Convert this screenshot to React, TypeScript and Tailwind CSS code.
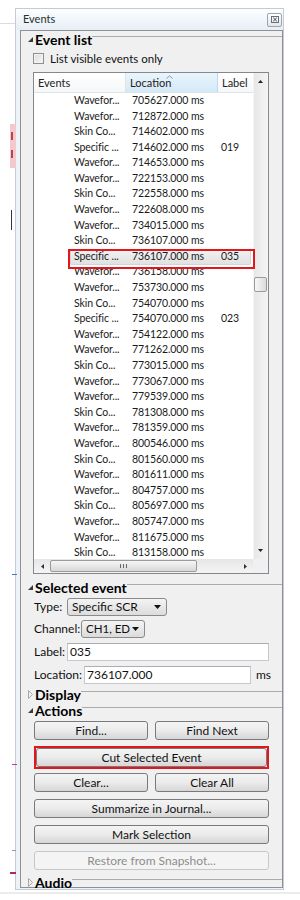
import React from "react";

type Row = { name: string; loc: string; label?: string };

const ROWS: Row[] = [
  { name: "Wavefor...", loc: "705627.000 ms" },
  { name: "Wavefor...", loc: "712872.000 ms" },
  { name: "Skin Co...", loc: "714602.000 ms" },
  { name: "Specific ...", loc: "714602.000 ms", label: "019" },
  { name: "Wavefor...", loc: "714653.000 ms" },
  { name: "Wavefor...", loc: "722153.000 ms" },
  { name: "Skin Co...", loc: "722558.000 ms" },
  { name: "Wavefor...", loc: "722608.000 ms" },
  { name: "Wavefor...", loc: "734015.000 ms" },
  { name: "Skin Co...", loc: "736107.000 ms" },
  { name: "Specific ...", loc: "736107.000 ms", label: "035" },
  { name: "Wavefor...", loc: "736158.000 ms" },
  { name: "Wavefor...", loc: "753730.000 ms" },
  { name: "Skin Co...", loc: "754070.000 ms" },
  { name: "Specific ...", loc: "754070.000 ms", label: "023" },
  { name: "Wavefor...", loc: "754122.000 ms" },
  { name: "Wavefor...", loc: "771262.000 ms" },
  { name: "Skin Co...", loc: "773015.000 ms" },
  { name: "Wavefor...", loc: "773067.000 ms" },
  { name: "Wavefor...", loc: "779539.000 ms" },
  { name: "Skin Co...", loc: "781308.000 ms" },
  { name: "Wavefor...", loc: "781359.000 ms" },
  { name: "Wavefor...", loc: "800546.000 ms" },
  { name: "Skin Co...", loc: "801560.000 ms" },
  { name: "Wavefor...", loc: "801611.000 ms" },
  { name: "Wavefor...", loc: "804757.000 ms" },
  { name: "Skin Co...", loc: "805697.000 ms" },
  { name: "Wavefor...", loc: "805747.000 ms" },
  { name: "Wavefor...", loc: "811675.000 ms" },
  { name: "Skin Co...", loc: "813158.000 ms" },
];

// index of the highlighted row
const SELECTED = 10;

function Triangle({ open }: { open: boolean }) {
  if (open) {
    return (
      <svg width="5" height="5" viewBox="0 0 5 5" className="mt-[5px]">
        <polygon points="5,0 5,5 0,5" fill="#3a3a3a" />
      </svg>
    );
  }
  return (
    <svg width="5" height="9" viewBox="0 0 5 9" className="mt-[3px]">
      <polygon points="0.5,0.5 4.5,4.5 0.5,8.5" fill="none" stroke="#a8a8a8" />
    </svg>
  );
}

function SectionHeader({ title, open, className }: { title: string; open: boolean; className: string }) {
  return (
    <div className={`flex h-[15px] items-start pl-[7px] ${className}`}>
      <div className="w-[7px] shrink-0">
        <Triangle open={open} />
      </div>
      <span className="text-[14px] font-bold leading-[15px] text-black">{title}</span>
      <div className="mt-[4px] h-px flex-1 bg-[#aaaaaa]" />
    </div>
  );
}

function Button({ children, disabled = false }: { children: React.ReactNode; disabled?: boolean }) {
  if (disabled) {
    return (
      <button
        type="button"
        className="flex h-[19px] w-full items-center justify-center rounded-[3px] border border-[#c4c8cc] bg-[#f4f4f4] text-[12px] text-[#8d8d8d]"
      >
        {children}
      </button>
    );
  }
  return (
    <button
      type="button"
      className="flex h-[19px] w-full items-center justify-center rounded-[3px] border border-[#7a7a7a] bg-linear-to-b from-[#f4f4f4] via-[#ebebeb] to-[#d6d6d6] text-[12px] text-[#111]"
    >
      {children}
    </button>
  );
}

function ComboArrow() {
  return (
    <svg width="7" height="4" viewBox="0 0 7 4" className="shrink-0">
      <polygon points="0,0 7,0 3.5,4" fill="#111" />
    </svg>
  );
}

function VScroll() {
  return (
    <div className="flex w-[15px] flex-col bg-linear-to-r from-[#e6e6e6] to-[#f5f5f5] shadow-[inset_1px_0_0_#f4f4f4]">
      <div className="flex h-[17px] items-center justify-center">
        <svg width="5" height="3" viewBox="0 0 5 3">
          <polygon points="0,3 5,3 2.5,0" fill="#222" />
        </svg>
      </div>
      <div className="flex-1">
        <div className="mt-[187px] ml-[1px] h-[15px] w-[13px] rounded-[2px] border border-[#9a9a9a] bg-linear-to-r from-[#f6f6f6] to-[#dcdcdc]" />
      </div>
      <div className="flex h-[17px] items-center justify-center">
        <svg width="5" height="3" viewBox="0 0 5 3">
          <polygon points="0,0 5,0 2.5,3" fill="#222" />
        </svg>
      </div>
      <div className="h-[14px] bg-[#f0f0f0]" />
    </div>
  );
}

function HScroll() {
  return (
    <div className="flex h-[14px] items-center bg-linear-to-b from-[#e6e6e6] to-[#f4f4f4]">
      <div className="flex w-[16px] justify-center">
        <svg width="3" height="5" viewBox="0 0 3 5">
          <polygon points="3,0 3,5 0,2.5" fill="#333" />
        </svg>
      </div>
      <div className="flex h-[12px] w-[147px] items-center justify-center gap-[2px] rounded-[2px] border border-[#9a9a9a] bg-linear-to-b from-[#f6f6f6] to-[#d8d8d8]">
        <div className="h-[4px] w-px bg-[#666]" />
        <div className="h-[4px] w-px bg-[#666]" />
        <div className="h-[4px] w-px bg-[#666]" />
      </div>
      <div className="flex flex-1 justify-end pr-[6px]">
        <svg width="3" height="5" viewBox="0 0 3 5">
          <polygon points="0,0 0,5 3,2.5" fill="#333" />
        </svg>
      </div>
    </div>
  );
}

function EventTable() {
  return (
    <div className="relative mt-[7px] ml-[12px] flex h-[502px] w-[236px] border border-[#828790] bg-white">
      <div className="flex w-[219px] flex-col">
        <div className="flex h-[20px] border-b border-[#e2e3e5] text-[11px] leading-[19px] text-[#222]">
          <div className="w-[92px] border-r border-[#e1e2e4] bg-linear-to-b from-white to-[#f6f7f8] pl-[4px]">Events</div>
          <div className="relative w-[92px] border-r border-[#bcd9ee] bg-linear-to-b from-[#eaf5fc] to-[#d3e9f8] pl-[4px]">
            Location
            <svg width="7" height="4" viewBox="0 0 7 4" className="absolute top-[2px] left-[40px]">
              <polyline points="0.5,3.5 3.5,0.8 6.5,3.5" fill="none" stroke="#8a9aa8" />
            </svg>
          </div>
          <div className="flex-1 bg-linear-to-b from-white to-[#f6f7f8] pl-[4px]">Label</div>
        </div>
        <div className="flex-1 overflow-hidden">
          {ROWS.map((r, i) => (
            <div key={i} className="flex h-[15.6px] pr-[2px] pl-[36px] text-[10.5px] tracking-[-0.1px] text-[#1a1a1a]">
              <div
                className={
                  i === SELECTED
                    ? "flex flex-1 items-center rounded-[2px] bg-linear-to-b from-[#f3f3f3] to-[#e0e0e0] shadow-[inset_0_0_0_1px_#d4d4d4]"
                    : "flex flex-1 items-center"
                }
              >
                <span className="w-[56px] shrink-0 overflow-hidden pl-[4px] whitespace-nowrap">{r.name}</span>
                <span className="w-[92px] shrink-0 pl-[6px] whitespace-nowrap">{r.loc}</span>
                <span className="pl-[3px]">{r.label}</span>
              </div>
            </div>
          ))}
        </div>
        <HScroll />
      </div>
      <VScroll />
      {/* red annotation around the selected row */}
      <div className="absolute top-[176px] left-[34px] h-[20px] w-[187px] border-2 border-[#e3161b]" />
    </div>
  );
}

function CloseButton() {
  return (
    <div className="flex h-[14px] w-[15px] items-center justify-center rounded-[2px] border border-[#9ea4ab] bg-linear-to-b from-white to-[#e2e6ea]">
      <svg width="8" height="7" viewBox="0 0 8 7">
        <rect x="0.5" y="0.5" width="7" height="6" fill="none" stroke="#6b6f74" />
        <path d="M2.2 1.8 L5.8 5.2 M5.8 1.8 L2.2 5.2" stroke="#45494e" strokeWidth="1" />
      </svg>
    </div>
  );
}

export default function App() {
  return (
    <div className="relative h-[900px] w-[300px] overflow-hidden bg-white pt-[8px] pl-[15px] font-['Lato',sans-serif] text-[#111]">
      {/* scraps of the window behind */}
      <div className="absolute top-[23px] left-0 h-px w-[15px] bg-[#dcdcdc]" />
      <div className="absolute top-[124px] left-[10px] h-[44px] w-[6px] bg-[#f3c9cd]" />
      <div className="absolute top-[132px] left-[11px] h-[8px] w-[2px] bg-[#c0404a]" />
      <div className="absolute top-[150px] left-[11px] h-[8px] w-[2px] bg-[#c0404a]" />
      <div className="absolute top-[210px] left-[11px] h-[20px] w-[3px] border-l border-[#333]" />
      <div className="absolute top-[574px] left-[12px] h-px w-[5px] bg-[#4a6fd0]" />
      <div className="absolute top-[764px] left-[12px] h-px w-[5px] bg-[#d0309a]" />
      <div className="absolute top-[850px] left-[12px] h-px w-[4px] bg-[#999]" />
      <div className="absolute top-[872px] left-[10px] h-[2px] w-[6px] bg-[#a03060]" />
      <div className="absolute top-[892px] left-0 h-[2px] w-[300px] bg-[#ececec]" />

      <div className="flex h-[882px] w-[269px] flex-col border border-[#c3ccd6] bg-[#eef3f8]">
        <div className="flex h-[21px] items-center justify-between bg-linear-to-b from-[#fdfeff] to-[#e7eef6] pr-[1px] pl-[7px]">
          <span className="text-[11px] text-[#22332b]">Events</span>
          <CloseButton />
        </div>

        <div className="ml-[4px] flex h-[858px] flex-col border border-[#8e9195] bg-[#f0f0f0] text-[12px]">
          <SectionHeader title="Event list" open className="mt-[1px]" />

          <div className="mt-[5px] flex h-[13px] items-center pl-[12px]">
            <div className="h-[11px] w-[11px] border border-[#8f8f8f] bg-linear-to-br from-[#d8dbe0] to-[#f8f8f8] shadow-[inset_0_0_0_1px_#f4f4f4]" />
            <span className="ml-[6px] text-[11.5px]">List visible events only</span>
          </div>

          <EventTable />

          <SectionHeader title="Selected event" open className="mt-[6px]" />

          <div className="mt-[3px] flex h-[18px] items-center pl-[13px]">
            <span className="w-[33px]">Type:</span>
            <div className="flex h-[18px] w-[100px] items-center justify-between rounded-[3px] border border-[#8a8a8a] bg-linear-to-b from-[#f4f4f4] to-[#dcdcdc] pr-[5px] pl-[4px]">
              <span className="whitespace-nowrap">Specific SCR</span>
              <ComboArrow />
            </div>
          </div>

          <div className="mt-[4px] flex h-[18px] items-center pl-[13px]">
            <span className="w-[47px]">Channel:</span>
            <div className="flex h-[18px] w-[64px] items-center justify-between rounded-[3px] border border-[#8a8a8a] bg-linear-to-b from-[#f4f4f4] to-[#dcdcdc] pr-[5px] pl-[4px]">
              <span className="text-[11.5px] whitespace-nowrap">CH1, ED</span>
              <ComboArrow />
            </div>
          </div>

          <div className="mt-[5px] flex h-[18px] items-center pl-[13px]">
            <span className="w-[33px]">Label:</span>
            <div className="flex h-[18px] w-[202px] items-center border border-[#c5c9cf] border-t-[#abadb3] bg-white pl-[2px]">035</div>
          </div>

          <div className="mt-[5px] flex h-[18px] items-center pl-[13px]">
            <span className="w-[50px]">Location:</span>
            <div className="flex h-[18px] w-[167px] items-center border border-[#c5c9cf] border-t-[#abadb3] bg-white pl-[2px]">736107.000</div>
            <span className="ml-[5px]">ms</span>
          </div>

          <SectionHeader title="Display" open={false} className="mt-[3px]" />
          <SectionHeader title="Actions" open className="mt-[1px]" />

          <div className="mt-[3px] ml-[13px] grid w-[235px] grid-cols-2 gap-[7px]">
            <Button>Find...</Button>
            <Button>Find Next</Button>
          </div>

          <div className="mt-[6px] ml-[13px] h-[23px] w-[235px] border-2 border-[#e3161b]">
            <Button>Cut Selected Event</Button>
          </div>

          <div className="mt-[4px] ml-[13px] grid w-[235px] grid-cols-2 gap-[7px]">
            <Button>Clear...</Button>
            <Button>Clear All</Button>
          </div>

          <div className="mt-[7px] ml-[13px] w-[235px]">
            <Button>Summarize in Journal...</Button>
          </div>
          <div className="mt-[7px] ml-[13px] w-[235px]">
            <Button>Mark Selection</Button>
          </div>
          <div className="mt-[7px] ml-[13px] w-[235px]">
            <Button disabled>Restore from Snapshot...</Button>
          </div>

          <SectionHeader title="Audio" open={false} className="mt-[5px]" />
        </div>
      </div>
    </div>
  );
}
